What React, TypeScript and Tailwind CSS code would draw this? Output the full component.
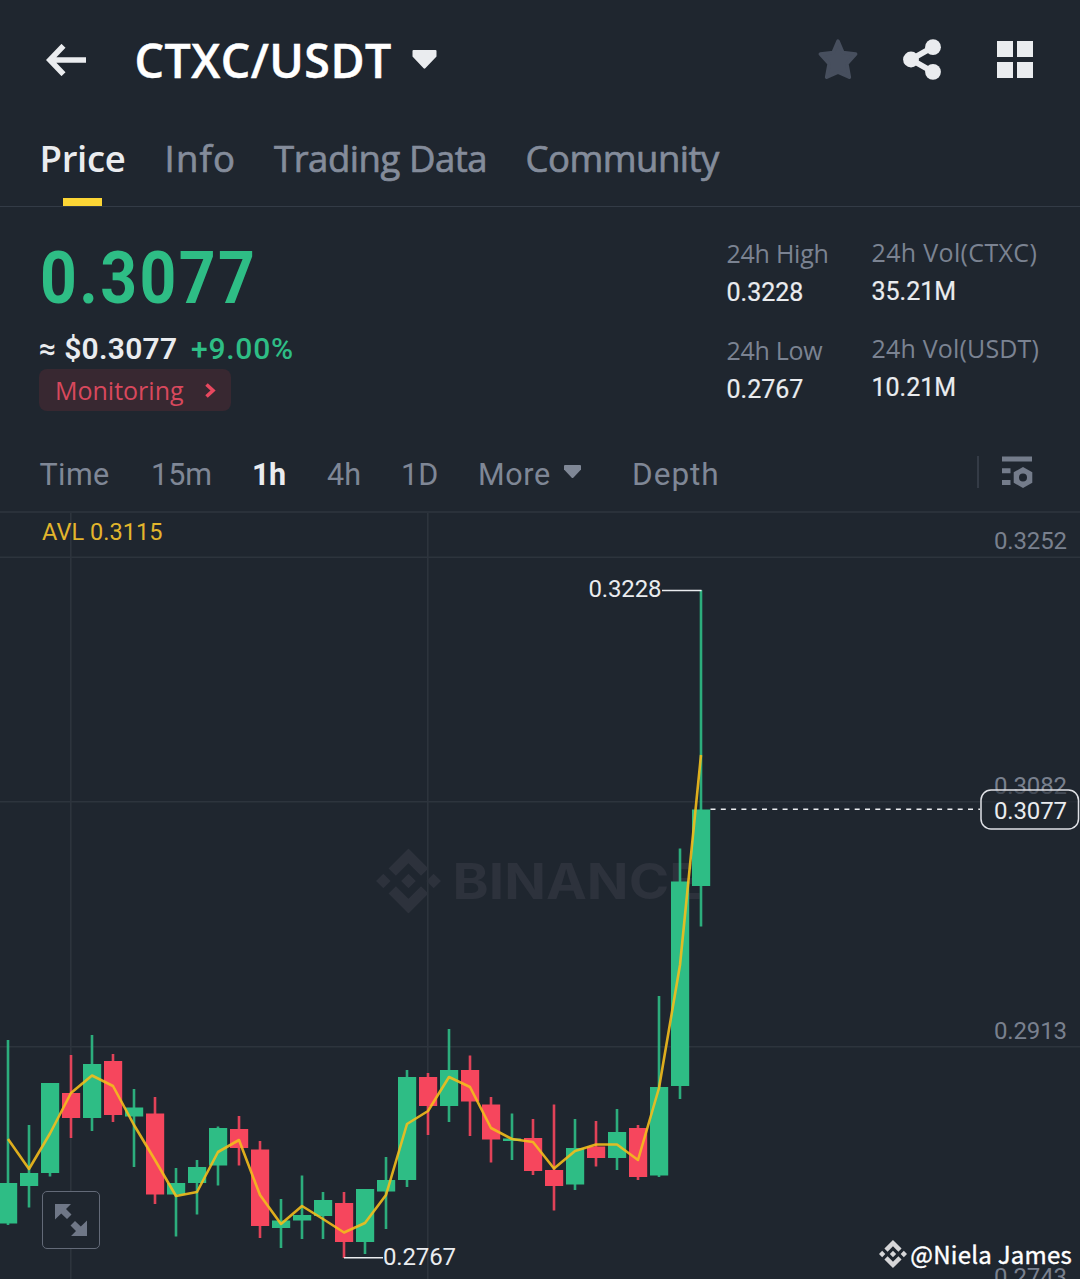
import React from 'react';
import { SiBinance } from 'react-icons/si';

type Candle = [up: boolean, high: number, top: number, bottom: number, low: number];

const UP = '#2ebd85';
const DOWN = '#f6465d';

const candles: Candle[] = [
  [true, 1040, 1183, 1223.5, 1225],
  [true, 1125, 1173, 1186, 1207.5],
  [true, 1083, 1083, 1173, 1176.5],
  [false, 1055, 1093, 1118, 1138],
  [true, 1035, 1064, 1118, 1131],
  [false, 1054, 1061, 1115, 1122],
  [true, 1089, 1107.5, 1116.5, 1167],
  [false, 1097, 1113.5, 1194.5, 1204],
  [true, 1168, 1183, 1194.5, 1236.5],
  [true, 1160, 1167, 1183, 1214.5],
  [true, 1126.5, 1128, 1165.5, 1185.5],
  [false, 1116, 1129, 1148, 1165.5],
  [false, 1141, 1149.5, 1226, 1238],
  [true, 1199, 1220.5, 1228, 1248],
  [true, 1175.5, 1215, 1220.5, 1239],
  [true, 1192, 1200, 1216, 1239],
  [false, 1192, 1203, 1242, 1258],
  [true, 1189, 1189, 1242, 1254],
  [true, 1157, 1180, 1191.5, 1229],
  [true, 1070, 1077, 1180, 1187],
  [false, 1073, 1077, 1106, 1135],
  [true, 1029, 1070, 1106, 1122],
  [false, 1055.5, 1070, 1101.5, 1136],
  [false, 1097, 1104.5, 1139.5, 1162.5],
  [true, 1113.5, 1138.5, 1141, 1160],
  [false, 1119, 1138, 1171, 1175],
  [false, 1104.5, 1170, 1186, 1210.5],
  [true, 1119, 1148, 1184.5, 1190],
  [false, 1121, 1146.5, 1158, 1166.5],
  [true, 1109, 1132, 1158, 1170],
  [false, 1125, 1128, 1177, 1180],
  [true, 996, 1087, 1175.5, 1177],
  [true, 848.5, 881.5, 1086, 1099],
  [true, 590, 809.5, 886, 926.5],
];

const average = [
  1139, 1169, 1133.5, 1093, 1075.5, 1086, 1125, 1160, 1196, 1192, 1152, 1140, 1195, 1224, 1206, 1219,
  1232.5, 1223, 1195, 1124, 1111, 1077, 1087, 1128, 1139, 1142, 1168.5, 1151, 1144.5, 1144.5, 1160,
  1088, 965, 755,
];

const centre = (i: number) => 8 + i * 21;

function Header() {
  return (
    <header className="flex h-[118px] items-center pr-[47px] pl-[46px]">
      <svg width="40" height="32" viewBox="0 0 40 32" className="mt-px shrink-0" fill="none" stroke="#eaecef" strokeWidth="5.6">
        <path d="M40 16H4.5M17.5 1.8L3.8 16l13.7 14.2" />
      </svg>
      <h1 className="mt-px ml-[48.5px] font-['Open_Sans'] text-[46.5px] leading-[60px] font-semibold tracking-[0.5px] text-white [-webkit-text-stroke:0.5px_#fff]">
        CTXC/USDT
      </h1>
      <svg width="25" height="19" viewBox="0 0 25 19" className="ml-[20px] shrink-0" fill="#eaecef">
        <path d="M1.500 0h22a1 1 0 0 1 1 1v5.500L13.300 18.300a1.200 1.200 0 0 1-1.700 0L.5 6.500V1a1 1 0 0 1 1-1z" />
      </svg>
      <div className="mt-px ml-auto flex items-center">
        <svg width="40" height="41" viewBox="0 0 40 41" fill="#474f5e" stroke="#474f5e" strokeWidth="3.6" strokeLinejoin="round">
          <path d="M20 2.200l4.800 11.300 12.800 1.600-8.800 9.600 2.500 13.500L20 33l-11.300 5.200 2.500-13.500-8.800-9.600 12.800-1.600z" />
        </svg>
        <svg width="38" height="41" viewBox="0 0 38 41" className="ml-[44.5px]" fill="#eaecef">
          <path d="M30 8L8 20.500l22 12.500" fill="none" stroke="#eaecef" strokeWidth="5.8" />
          <circle cx="30" cy="8.200" r="7.900" />
          <circle cx="8" cy="20.500" r="7.900" />
          <circle cx="30" cy="32.800" r="7.900" />
        </svg>
        <div className="ml-[56px] grid grid-cols-[16px_16px] grid-rows-[16px_16px] gap-[4.5px]">
          <i className="bg-[#eaecef]" />
          <i className="bg-[#eaecef]" />
          <i className="bg-[#eaecef]" />
          <i className="bg-[#eaecef]" />
        </div>
      </div>
    </header>
  );
}

function Tabs() {
  return (
    <nav className="flex h-[89px] border-b border-[#333b46] pt-[14.5px] pl-[39.5px] font-['Open_Sans'] text-[36.5px] leading-[50px] whitespace-nowrap text-[#848c9b]">
      <div className="flex w-[125px] flex-col">
        <span className="font-semibold tracking-[-0.3px] text-[#eaecef]">Price</span>
        <span className="mt-auto ml-[23.5px] h-2 w-[39px] bg-[#fcd535]" />
      </div>
      <span className="w-[109.5px] tracking-[1.2px] [-webkit-text-stroke:0.7px_#848c9b]">Info</span>
      <span className="w-[251.5px] tracking-[-0.45px] [-webkit-text-stroke:0.7px_#848c9b]">Trading Data</span>
      <span className="tracking-[-0.5px] [-webkit-text-stroke:0.7px_#848c9b]">Community</span>
    </nav>
  );
}

function Stat({ label, value, tracking }: { label: string; value: string; tracking: string }) {
  return (
    <div className="whitespace-nowrap">
      <div className={`font-['Open_Sans'] text-[25px] leading-[30px] text-[#7b8392] ${tracking}`}>{label}</div>
      <div className="mt-[10px] text-[25px] leading-[30px] text-[#eaecef] [-webkit-text-stroke:0.2px_#eaecef]">{value}</div>
    </div>
  );
}

function Summary() {
  return (
    <section className="flex h-[228px]">
      <div className="w-[726.5px] pt-[35px] pl-[39px]">
        <div className="ml-px inline-block origin-left scale-x-[0.88] text-[73px] leading-[72px] font-bold tracking-[2.7px] text-[#2ebd85]">
          0.3077
        </div>
        <div className="mt-[17px] flex text-[30px] leading-[36px] whitespace-nowrap">
          <span className="w-[152px] font-semibold tracking-[0.26px] text-[#eaecef]">≈ $0.3077</span>
          <span className="font-medium tracking-[0.77px] text-[#2ebd85]">+9.00%</span>
        </div>
        <div className="mt-[2px] flex h-[42px] w-[192px] items-center rounded-[8px] bg-[#382831] pl-[16px] text-[#d9485d]">
          <span className="font-['Open_Sans'] text-[25px] leading-[40px]">Monitoring</span>
          <svg width="11" height="15" viewBox="0 0 11 15" className="ml-[21px]" fill="none" stroke="#e8485f" strokeWidth="3.6">
            <path d="M1.500 1.500l6.500 6-6.500 6" />
          </svg>
        </div>
      </div>
      <div className="flex w-[145px] flex-col gap-[27px] pt-[31px]">
        <Stat label="24h High" value="0.3228" tracking="tracking-[-0.25px]" />
        <Stat label="24h Low" value="0.2767" tracking="tracking-[-0.3px]" />
      </div>
      <div className="flex flex-col gap-[26px] pt-[30px]">
        <Stat label="24h Vol(CTXC)" value="35.21M" tracking="tracking-[0.35px]" />
        <Stat label="24h Vol(USDT)" value="10.21M" tracking="tracking-[0.18px]" />
      </div>
    </section>
  );
}

function Intervals() {
  return (
    <div className="flex h-[78px] items-center border-b-2 border-[#2a313a] pl-[39.5px] text-[30.5px] whitespace-nowrap text-[#7f8796]">
      <div className="flex pt-[3px] leading-[40px]">
        <span className="w-[111.5px] tracking-[0.4px]">Time</span>
        <span className="w-[101px]">15m</span>
        <span className="w-[75px] font-bold tracking-[-0.5px] text-[#eaecef]">1h</span>
        <span className="w-[74px]">4h</span>
        <span className="w-[77px]">1D</span>
        <span className="flex w-[154px] tracking-[0.64px]">
          More
          <svg width="17" height="14" viewBox="0 0 17 14" className="mt-[10px] ml-[13px]" fill="#7f8796">
            <path d="M1 0h15q1 0 1 1v3.500L9.500 12.500q-1 1-2 0L0 4.500V1q0-1 1-1z" />
          </svg>
        </span>
        <span className="text-[31.5px] tracking-[1px]">Depth</span>
      </div>
      <div className="mr-[47px] mb-[2px] ml-auto flex items-center">
        <span className="h-8 w-[2px] bg-[#343b46]" />
        <svg width="32" height="33" viewBox="0 0 32 33" className="ml-[22px]" fill="#747c8b">
          <path d="M1 .5h30v5H1zM1 12.300h8.500v5H1zM1 24h8.500v5H1z" />
          <path fillRule="evenodd" d="M22 11l9.300 5.200v10.600L22 32l-9.300-5.200V16.200zM22 17.500a4 4 0 1 0 0 8 4 4 0 0 0 0-8z" />
        </svg>
      </div>
    </div>
  );
}

function Chart() {
  return (
    <div className="relative h-[766px]">
      <svg width="1080" height="766" viewBox="0 513 1080 766" className="block" fontFamily="Roboto, sans-serif" fontSize="24">
        <g fill="#2d343d">
          <rect x="0" y="556.500" width="1080" height="1.500" />
          <rect x="0" y="801" width="1080" height="1.500" />
          <rect x="0" y="1046" width="1080" height="1.500" />
          <rect x="70" y="513" width="1.600" height="766" />
          <rect x="427" y="513" width="1.600" height="766" />
        </g>

        <g fill="#2d323c">
          <SiBinance x={376} y={848.5} size={65} color="#2d323c" />
          <text
            x="452.500"
            y="898.500"
            fontFamily="Inter, sans-serif"
            fontWeight="700"
            fontSize="49.500"
            textLength="250"
            lengthAdjust="spacingAndGlyphs"
          >
            BINANCE
          </text>
        </g>

        {candles.map(([up, high, top, bottom, low], i) => (
          <g key={i} fill={up ? UP : DOWN}>
            <rect x={centre(i) - 1.3} y={high} width="2.6" height={low - high} fillOpacity="0.9" />
            <rect x={centre(i) - 9} y={top} width="18.2" height={bottom - top} />
          </g>
        ))}
        <polyline
          points={average.map((y, i) => `${centre(i)},${y}`).join(' ')}
          fill="none"
          stroke="#f3bd1c"
          strokeOpacity="0.9"
          strokeWidth="2.600"
          strokeLinejoin="round"
        />

        <text x="42" y="540" fontSize="23.500" fill="#e3b52c" textLength="120.500">AVL 0.3115</text>
        <g fill="#79808e">
          <text x="994" y="549" textLength="73">0.3252</text>
          <text x="994" y="793.500" textLength="73">0.3082</text>
          <text x="994" y="1039" textLength="73">0.2913</text>
          <text x="994" y="1284.500" textLength="73">0.2743</text>
        </g>

        <path d="M662 590.500h39.500M344 1257.800h39" stroke="#eaecef" strokeWidth="1.500" />
        <g fill="#eaecef">
          <text x="588.500" y="597" textLength="73">0.3228</text>
          <text x="383" y="1265" textLength="73">0.2767</text>
        </g>

        <path d="M710.500 809.300H980" stroke="#eaecef" strokeWidth="1.400" strokeDasharray="5 5.300" />
        <rect x="981" y="790" width="97.500" height="39" rx="10" fill="#1f262f" fillOpacity="0.6" stroke="#dfe1e6" strokeWidth="1.500" />
        <text x="994" y="819" fill="#eaecef" textLength="73">0.3077</text>
      </svg>

      <button className="absolute bottom-[30px] left-[42px] flex size-[58px] items-center justify-center rounded-[5px] border-[1.5px] border-[#636a78] bg-[#1f262f]">
        <svg width="34" height="34" viewBox="0 0 34 34" fill="#6f7787">
          <path d="M1 1h16l-5 5 5.500 5.500-4.500 4.500L7.200 10.400 1 16.500zM33 33H17l5-5-5.500-5.500 4.500-4.500 5.800 5.600 6.200-6.100z" />
        </svg>
      </button>

      <div className="absolute right-[8px] bottom-[7px] flex items-center gap-[3px] text-white">
        <SiBinance size={28} color="#d6d6d8" />
        <span className="font-['Noto_Sans_CJK_SC'] text-[24px] leading-[36px] tracking-[0.25px] [-webkit-text-stroke:0.4px_#fff]">
          @Niela James
        </span>
      </div>
    </div>
  );
}

export default function App() {
  return (
    <main className="h-[1279px] w-[1080px] overflow-hidden bg-[#1f262f] font-[Roboto]">
      <Header />
      <Tabs />
      <Summary />
      <Intervals />
      <Chart />
    </main>
  );
}
